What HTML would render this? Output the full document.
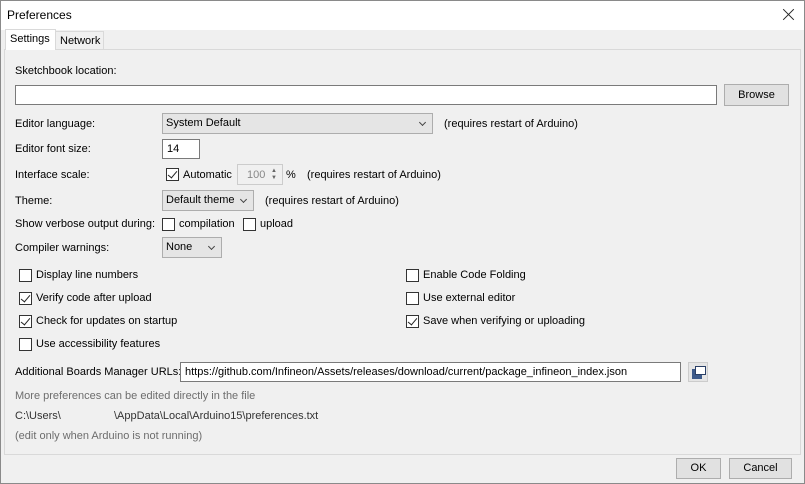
<!DOCTYPE html><html><head><style>
body{margin:0;width:805px;height:484px;overflow:hidden;background:#f0f0f0;font-family:"Liberation Sans",sans-serif;font-size:11px;color:#000;position:relative}
div,span{position:absolute;box-sizing:border-box}
.t{white-space:nowrap;line-height:14px}
.in{background:#fff;border:1px solid #7a7a7a}
.btn{background:#e1e1e1;border:1px solid #adadad;text-align:center;line-height:19px}
.cb{width:13px;height:13px;border:1px solid #333;background:#fff}
.cb.c::after{content:"";position:absolute;left:3px;top:0px;width:4px;height:8px;border:solid #222;border-width:0 1.5px 1.5px 0;transform:rotate(40deg)}
.dd{background:#e5e5e5;border:1px solid #adadad;line-height:19px;padding-left:3px}
.ar{position:absolute;right:7px;top:6px;width:5px;height:5px;border:solid #444;border-width:0 1px 1px 0;transform:rotate(45deg)}
.g{color:#6d6d6d}
</style></head><body>
<div style="left:0;top:0;width:805px;height:484px;border:1px solid #8a8a8a"></div>
<div style="left:1px;top:1px;width:803px;height:29px;background:#fff"></div>
<div class="t" style="left:7px;top:8px;font-size:12px">Preferences</div>
<div style="left:781px;top:14px;width:15px;height:1px;background:#222;transform:rotate(45deg)"></div>
<div style="left:781px;top:14px;width:15px;height:1px;background:#222;transform:rotate(-45deg)"></div>
<div style="left:4px;top:49px;width:797px;height:406px;border:1px solid #d9d9d9;background:#f0f0f0"></div>
<div style="left:55px;top:31px;width:49px;height:18px;border:1px solid #d9d9d9;border-bottom:none;background:#f0f0f0"></div>
<div class="t" style="left:60px;top:34px">Network</div>
<div style="left:5px;top:29px;width:51px;height:21px;border:1px solid #d9d9d9;border-bottom:none;background:#fff"></div>
<div class="t" style="left:10px;top:32px">Settings</div>

<div class="t" style="left:15px;top:64px">Sketchbook location:</div>
<div class="in" style="left:15px;top:85px;width:702px;height:20px"></div>
<div class="btn" style="left:724px;top:84px;width:65px;height:22px;line-height:20px">Browse</div>

<div class="t" style="left:15px;top:117px">Editor language:</div>
<div class="dd" style="left:162px;top:113px;width:271px;height:21px">System Default<span class="ar"></span></div>
<div class="t" style="left:444px;top:117px">(requires restart of Arduino)</div>

<div class="t" style="left:15px;top:142px">Editor font size:</div>
<div class="in t" style="left:162px;top:139px;width:38px;height:20px;padding:2px 0 0 4px">14</div>

<div class="t" style="left:15px;top:168px">Interface scale:</div>
<div class="cb c" style="left:166px;top:168px"></div>
<div class="t" style="left:183px;top:168px">Automatic</div>
<div class="in" style="left:237px;top:164px;width:46px;height:21px;border-color:#ccc;background:#f0f0f0"><span class="t" style="left:9px;top:3px;color:#888">100</span><span style="left:33px;top:3px;font-size:6px;color:#666;line-height:7px">▲<br>▼</span></div>
<div class="t" style="left:286px;top:168px">%</div>
<div class="t" style="left:307px;top:168px">(requires restart of Arduino)</div>

<div class="t" style="left:15px;top:194px">Theme:</div>
<div class="dd" style="left:162px;top:190px;width:92px;height:21px">Default theme<span class="ar"></span></div>
<div class="t" style="left:265px;top:194px">(requires restart of Arduino)</div>

<div class="t" style="left:15px;top:217px">Show verbose output during:</div>
<div class="cb" style="left:162px;top:218px"></div>
<div class="t" style="left:179px;top:217px">compilation</div>
<div class="cb" style="left:243px;top:218px"></div>
<div class="t" style="left:260px;top:217px">upload</div>

<div class="t" style="left:15px;top:241px">Compiler warnings:</div>
<div class="dd" style="left:162px;top:237px;width:60px;height:21px">None<span class="ar"></span></div>

<div class="cb" style="left:19px;top:269px"></div><div class="t" style="left:36px;top:268px">Display line numbers</div>
<div class="cb c" style="left:19px;top:292px"></div><div class="t" style="left:36px;top:291px">Verify code after upload</div>
<div class="cb c" style="left:19px;top:315px"></div><div class="t" style="left:36px;top:314px">Check for updates on startup</div>
<div class="cb" style="left:19px;top:338px"></div><div class="t" style="left:36px;top:337px">Use accessibility features</div>
<div class="cb" style="left:406px;top:269px"></div><div class="t" style="left:423px;top:268px">Enable Code Folding</div>
<div class="cb" style="left:406px;top:292px"></div><div class="t" style="left:423px;top:291px">Use external editor</div>
<div class="cb c" style="left:406px;top:315px"></div><div class="t" style="left:423px;top:314px">Save when verifying or uploading</div>

<div class="t" style="left:15px;top:365px">Additional Boards Manager URLs:</div>
<div class="in" style="left:180px;top:362px;width:501px;height:20px"><span class="t" style="left:4px;top:2px">https://github.com/Infineon/Assets/releases/download/current/package_infineon_index.json</span></div>
<div style="left:688px;top:362px;width:20px;height:20px;background:#e5e5e5;border:1px solid #ccc">
<span style="left:3px;top:6px;width:10px;height:10px;background:#3d5a8a"></span>
<span style="left:6px;top:3px;width:11px;height:9px;background:#fff;border:1.5px solid #2a3f66"></span></div>

<div class="t g" style="left:15px;top:389px">More preferences can be edited directly in the file</div>
<div class="t" style="left:15px;top:409px;color:#333">C:\Users\</div>
<div class="t" style="left:114px;top:409px;color:#333">\AppData\Local\Arduino15\preferences.txt</div>
<div class="t g" style="left:15px;top:429px">(edit only when Arduino is not running)</div>

<div class="btn" style="left:676px;top:458px;width:45px;height:21px">OK</div>
<div class="btn" style="left:729px;top:458px;width:63px;height:21px">Cancel</div>
</body></html>
